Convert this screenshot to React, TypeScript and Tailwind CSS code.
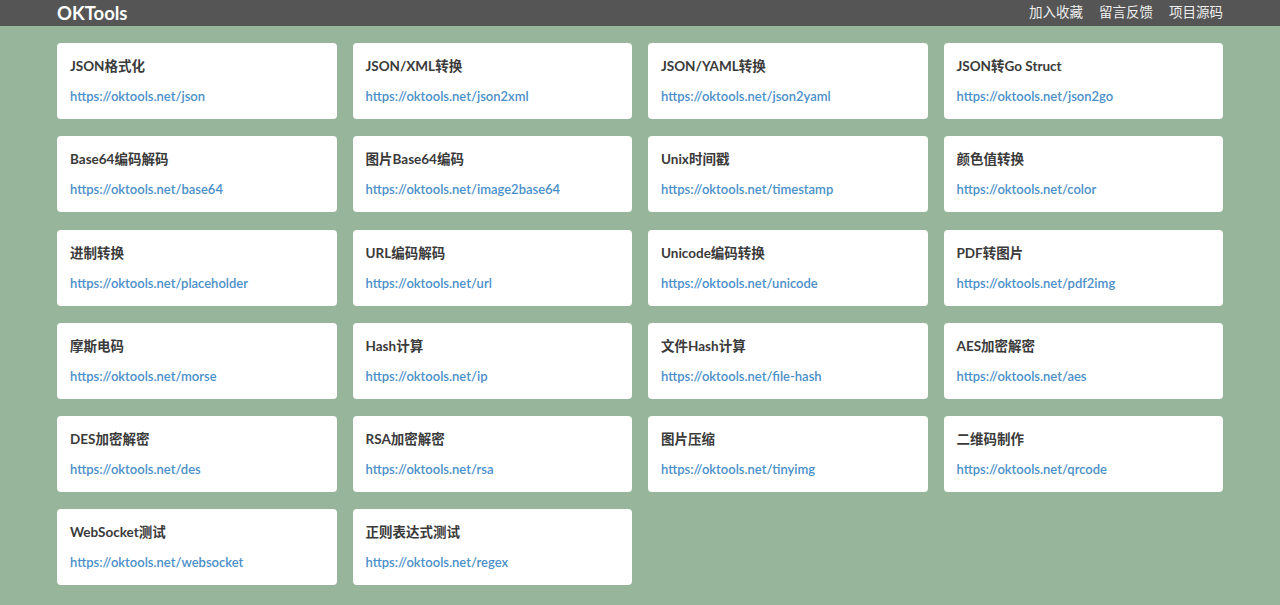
const TOOLS: { name: string; url: string }[] = [
  { name: 'JSON格式化', url: 'https://oktools.net/json' },
  { name: 'JSON/XML转换', url: 'https://oktools.net/json2xml' },
  { name: 'JSON/YAML转换', url: 'https://oktools.net/json2yaml' },
  { name: 'JSON转Go Struct', url: 'https://oktools.net/json2go' },
  { name: 'Base64编码解码', url: 'https://oktools.net/base64' },
  { name: '图片Base64编码', url: 'https://oktools.net/image2base64' },
  { name: 'Unix时间戳', url: 'https://oktools.net/timestamp' },
  { name: '颜色值转换', url: 'https://oktools.net/color' },
  { name: '进制转换', url: 'https://oktools.net/placeholder' },
  { name: 'URL编码解码', url: 'https://oktools.net/url' },
  { name: 'Unicode编码转换', url: 'https://oktools.net/unicode' },
  { name: 'PDF转图片', url: 'https://oktools.net/pdf2img' },
  { name: '摩斯电码', url: 'https://oktools.net/morse' },
  { name: 'Hash计算', url: 'https://oktools.net/ip' },
  { name: '文件Hash计算', url: 'https://oktools.net/file-hash' },
  { name: 'AES加密解密', url: 'https://oktools.net/aes' },
  { name: 'DES加密解密', url: 'https://oktools.net/des' },
  { name: 'RSA加密解密', url: 'https://oktools.net/rsa' },
  { name: '图片压缩', url: 'https://oktools.net/tinyimg' },
  { name: '二维码制作', url: 'https://oktools.net/qrcode' },
  { name: 'WebSocket测试', url: 'https://oktools.net/websocket' },
  { name: '正则表达式测试', url: 'https://oktools.net/regex' },
];

const NAV = ['加入收藏', '留言反馈', '项目源码'];

export default function App() {
  return (
    <div
      className="min-h-[605px] bg-[#97b59b]"
      style={{ fontFamily: 'Lato, "Noto Sans CJK SC", sans-serif' }}
    >
      {/* top bar */}
      <header className="h-[26px] bg-[#555555]">
        <div className="mx-auto flex h-full w-[1166px] items-center justify-between">
          <span className="text-[18.5px] font-bold leading-none text-white">OKTools</span>
          <nav className="flex gap-4 text-[13.5px] text-[#eeeeee]">
            {NAV.map((n) => (
              <a key={n} href="#" className="leading-none">
                {n}
              </a>
            ))}
          </nav>
        </div>
      </header>

      <main className="mx-auto grid w-[1166px] grid-cols-4 gap-x-4 gap-y-[17.3px] pt-[17px] pb-5">
        {TOOLS.map((t) => (
          <a
            key={t.url}
            href="#"
            className="flex h-[76px] flex-col rounded-[4px] bg-white px-[13px] pt-[14px]"
          >
            <span className="text-[13.5px] font-bold leading-[18px] text-[#3a3a3a]">{t.name}</span>
            <span className="mt-[12px] text-[13px] font-semibold leading-[18px] text-[#4a8fc9]">
              {t.url}
            </span>
          </a>
        ))}
      </main>
    </div>
  );
}
